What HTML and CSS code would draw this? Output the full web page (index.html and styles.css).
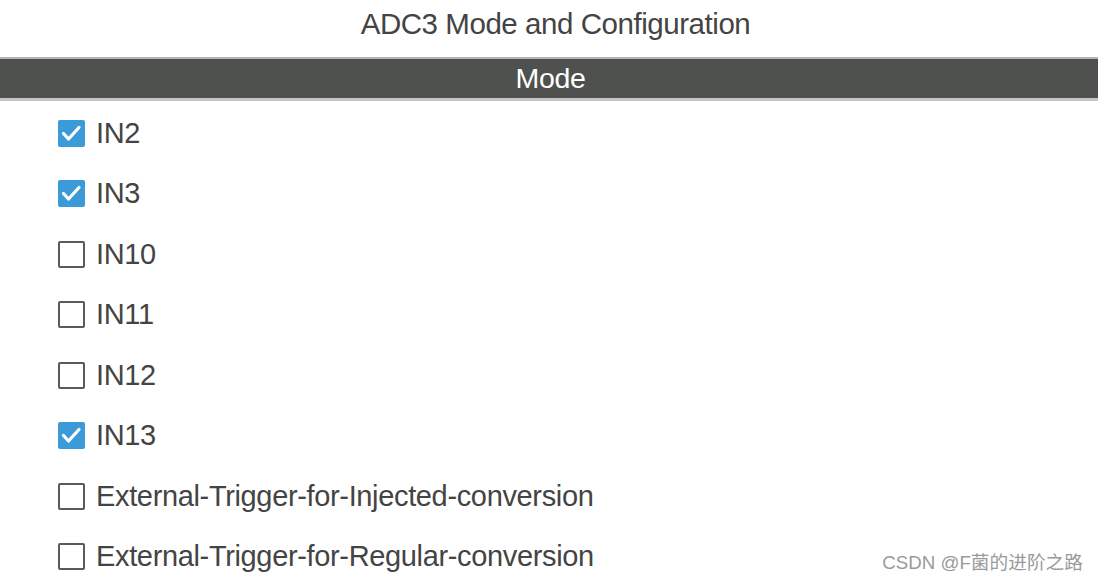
FILE: index.html
```html
<!DOCTYPE html>
<html>
<head>
<meta charset="utf-8">
<link rel="stylesheet" href="styles.css">
</head>
<body>
<div class="page">
  <div class="title">ADC3 Mode and Configuration</div>
  <div class="bar">Mode</div>
  <ul class="list">
    <li class="row"><span class="box on"><svg viewBox="0 0 27 27"><path d="M5.5 13.5l5 5.5 10.5-11.5" /></svg></span><span class="label">IN2</span></li>
    <li class="row"><span class="box on"><svg viewBox="0 0 27 27"><path d="M5.5 13.5l5 5.5 10.5-11.5" /></svg></span><span class="label">IN3</span></li>
    <li class="row"><span class="box"></span><span class="label">IN10</span></li>
    <li class="row"><span class="box"></span><span class="label">IN11</span></li>
    <li class="row"><span class="box"></span><span class="label">IN12</span></li>
    <li class="row"><span class="box on"><svg viewBox="0 0 27 27"><path d="M5.5 13.5l5 5.5 10.5-11.5" /></svg></span><span class="label">IN13</span></li>
    <li class="row"><span class="box"></span><span class="label">External-Trigger-for-Injected-conversion</span></li>
    <li class="row"><span class="box"></span><span class="label">External-Trigger-for-Regular-conversion</span></li>
  </ul>
  <div class="mark">CSDN @F菌的进阶之路</div>
</div>
</body>
</html>
```
FILE: styles.css
```css
* { box-sizing: border-box; }
html, body { margin: 0; padding: 0; background: #fff; }
body { font-family: "Liberation Sans", Arial, "Noto Sans CJK SC", sans-serif; }
.page { position: relative; width: 1098px; height: 582px; overflow: hidden; }
.title {
  height: 57px;
  padding-top: 7px;
  padding-left: 13px;
  text-align: center;
  font-size: 29.5px;
  color: #444;
  letter-spacing: -0.45px;
}
.bar {
  height: 44px;
  background: #4f514f;
  border-top: 2px solid #b4b4b4;
  border-bottom: 3px solid #c4c4c4;
  color: #fff;
  font-size: 28.5px;
  text-align: center;
  line-height: 39px;
  letter-spacing: -0.3px;
  padding-left: 3px;
}
.list { list-style: none; margin: 0; padding: 2px 0 0 58px; }
.row { display: flex; align-items: center; height: 60.5px; }
.box {
  width: 27px; height: 27px;
  border: 2.5px solid #5a5a5a;
  border-radius: 2px;
  background: #fff;
  margin-right: 11px;
  flex: none;
}
.box.on { background: #3a9bd8; border: none; }
.box svg { width: 27px; height: 27px; display: block; }
.box svg path { fill: none; stroke: #fff; stroke-width: 3.2; stroke-linecap: round; stroke-linejoin: round; }
.label { font-size: 29px; color: #444; letter-spacing: -0.35px; }
.mark {
  position: absolute; right: 15px; bottom: 8px;
  font-size: 18.7px; color: #9a9a9a;
}
```
